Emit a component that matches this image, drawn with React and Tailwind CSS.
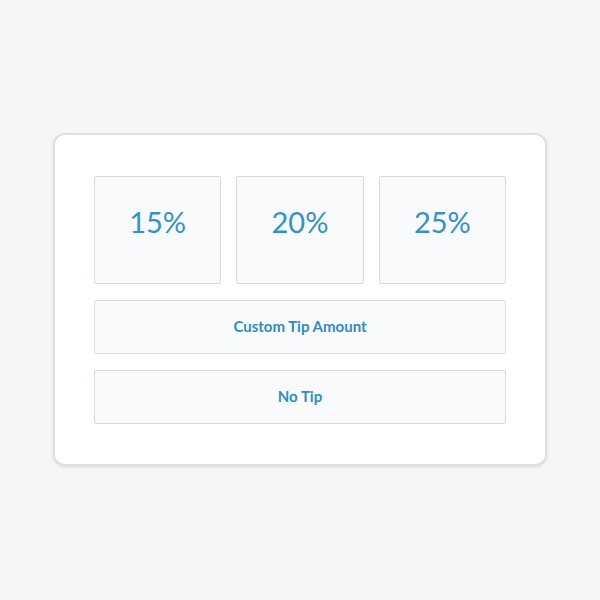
import React from "react";

const tips = ["15%", "20%", "25%"];

export default function App() {
  return (
    <div className="w-[600px] h-[600px] bg-[#f6f6f6] flex items-center justify-center" style={{ fontFamily: "Lato, 'Open Sans', sans-serif" }}>
      <div className="w-[494px] h-[333px] bg-white rounded-[12px] border-2 border-[#e0e0e0] shadow-[0_1px_3px_rgba(0,0,0,0.12)] px-[39px] pt-[41px] flex flex-col gap-[16px] -translate-y-[1px]">
        <div className="grid grid-cols-3 gap-[15px]">
          {tips.map((t) => (
            <button
              key={t}
              className="h-[108px] bg-[#f8fafc] border border-[#d7dce0] rounded-[2px] flex items-center justify-center pb-[16px] text-[29px] font-normal text-[#3592c7]"
            >
              {t}
            </button>
          ))}
        </div>
        <button className="h-[54px] bg-[#f8fafc] border border-[#d7dce0] rounded-[2px] text-[15px] font-bold text-[#2f8cc2]">
          Custom Tip Amount
        </button>
        <button className="h-[54px] bg-[#f8fafc] border border-[#d7dce0] rounded-[2px] text-[15px] font-bold text-[#2f8cc2]">
          No Tip
        </button>
      </div>
    </div>
  );
}
